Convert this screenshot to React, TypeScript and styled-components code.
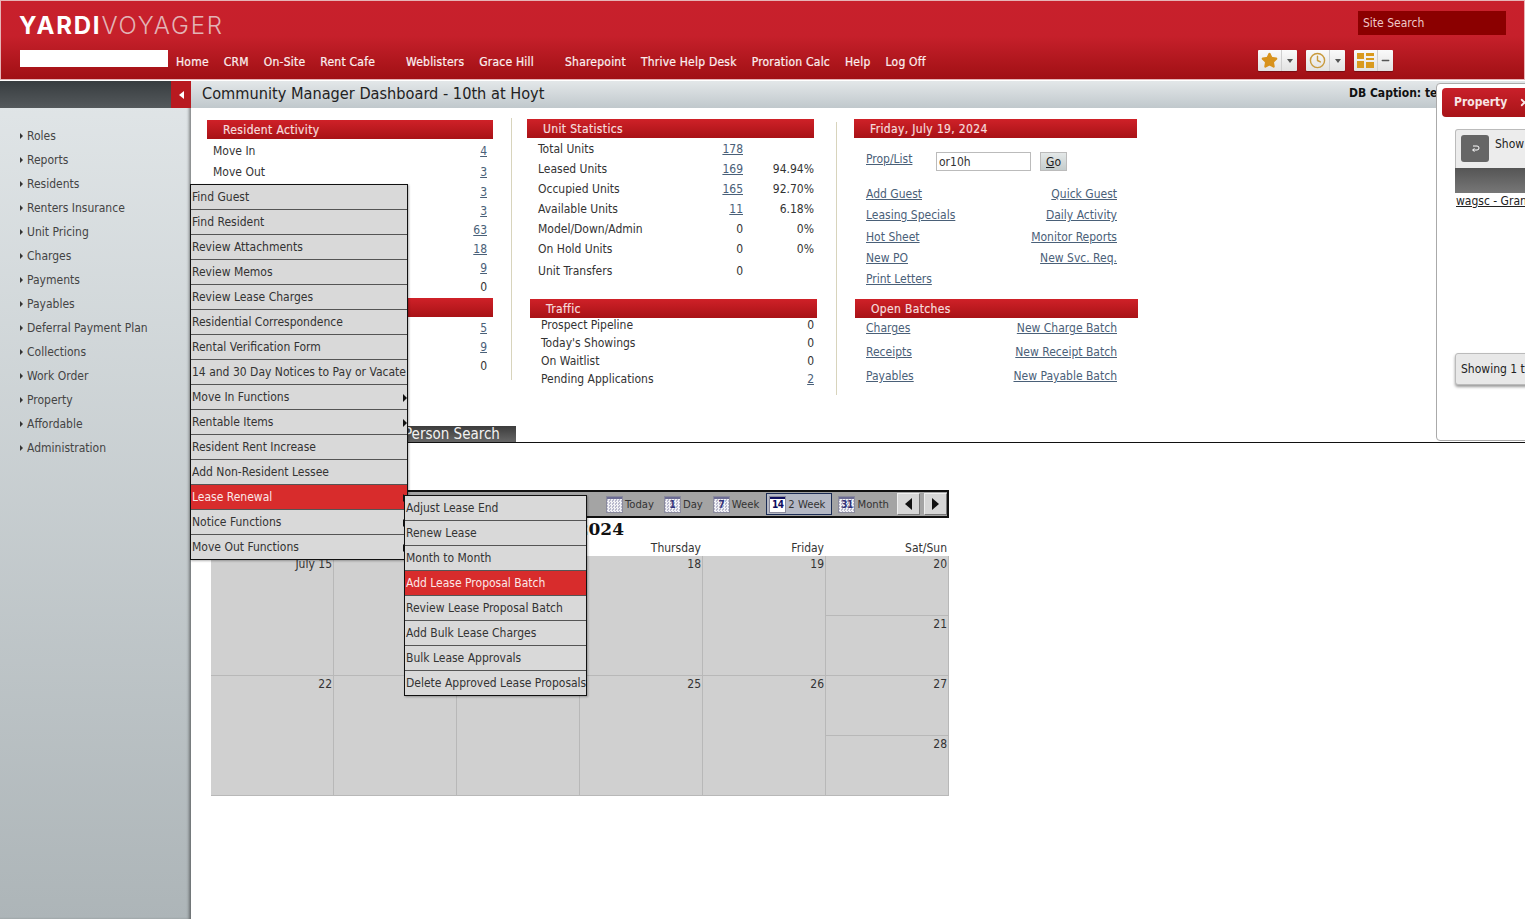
import React, { FC } from 'react'
import styled, { createGlobalStyle } from 'styled-components'
import { Star, Clock, Minus, X } from 'lucide-react'

const FONT = `'DejaVu Sans Condensed', 'Noto Sans', Tahoma, sans-serif`

const Global = createGlobalStyle`
html, body {
  margin: 0;
  height: 100%;
  background: #fff;
  overflow: hidden;
}
* { box-sizing: border-box; }
`
const Page = styled.div`
position: relative;
width: 1525px;
height: 919px;
overflow: hidden;
font-family: ${FONT};
font-size: 12px;
color: #333;
`
const Header = styled.header`
height: 80px;
border: 1px solid #e6b4b6;
background: linear-gradient(#c8202c 0%, #c6202b 45%, #a01014 100%);
padding: 10px 18px 0 18px;
display: flex;
flex-direction: column;
`
const TopRow = styled.div`
display: flex;
justify-content: space-between;
height: 39px;
`
const Logo = styled.div`
font-family: Inter, 'Liberation Sans', Arial, sans-serif;
font-size: 24px;
font-weight: 300;
line-height: 28px;
letter-spacing: 1.8px;
color: #e3b3b5;
margin-top: 1px;
b { color: #fff; font-weight: 700; margin-right: 0; }
`
const SiteSearch = styled.div`
width: 148px;
height: 24px;
background: #8b0000;
color: #f0c8c8;
padding: 0 5px;
line-height: 24px;
font-size: 12px;
`
const NavRow = styled.div`
display: flex;
align-items: flex-start;
`
const NavBox = styled.div`
width: 148px;
height: 17px;
background: #fff;
margin: 0 8px 0 1px;
`
const NavLink = styled.a<{ $wide?: boolean }>`
color: #fbeaea;
font-size: 12px;
line-height: 22px;
letter-spacing: 0.22px;
margin-top: 1px;
margin-right: ${p => (p.$wide ? 31 : 15)}px;
-webkit-text-stroke: 0.2px #fff;
white-space: nowrap;
`
const Tools = styled.div`
display: flex;
gap: 9px;
margin-left: auto;
margin-right: 113px;
margin-top: 0;
`
const Tool = styled.div`
width: 39px;
height: 21px;
display: flex;
background: linear-gradient(#fafafa, #e2e2e2);
border-radius: 1px;
box-shadow: 0 1px 1px rgba(0,0,0,.3);
`
const ToolIcon = styled.div`
width: 24px;
display: flex;
align-items: center;
justify-content: center;
border-right: 1px solid #cfcfcf;
`
const ToolEnd = styled.div`
flex: 1;
display: flex;
align-items: center;
justify-content: center;
color: #555;
`
const Caret = styled.span`
border-left: 3px solid transparent;
border-right: 3px solid transparent;
border-top: 4px solid #555;
`
const Body = styled.div`
display: flex;
margin-top: 1px;
height: 838px;
`
const Sidebar = styled.aside`
width: 191px;
flex-shrink: 0;
background: linear-gradient(#e1e6e8, #adb5b8);
box-shadow: inset -3px 0 3px -1px rgba(0,0,0,.4);
`
const SideTop = styled.div`
height: 27px;
background: linear-gradient(#383d40, #54595c);
display: flex;
justify-content: flex-end;
`
const Collapse = styled.div`
width: 20px;
background: #b81a20;
display: flex;
align-items: center;
justify-content: center;
&::before {
  content: '';
  border-top: 4px solid transparent;
  border-bottom: 4px solid transparent;
  border-right: 5px solid #fff;
}
`
const SideList = styled.nav`
padding: 16px 0 0 20px;
`
const SideItem = styled.div`
height: 24px;
line-height: 24px;
color: #444;
display: flex;
align-items: center;
gap: 4px;
&::before {
  content: '';
  border-top: 3px solid transparent;
  border-bottom: 3px solid transparent;
  border-left: 3px solid #333;
}
`
const Main = styled.main`
flex: 1;
min-width: 0;
`
const TitleBar = styled.div`
height: 27px;
background: linear-gradient(#e3e7e9, #c0c8cc);
display: flex;
justify-content: space-between;
padding-left: 11px;
`
const Title = styled.h1`
margin: 0;
font-size: 16.2px;
font-weight: 400;
line-height: 26px;
color: #222;
`
const Caption = styled.div`
font-size: 12px;
font-weight: 700;
line-height: 24px;
color: #111;
white-space: nowrap;
margin-right: -12px;
width: 99px;
overflow: hidden;
position: relative;
left: -89px;
`
const Columns = styled.div`
display: flex;
height: 318px;
`
const ActivityCol = styled.section`
width: 320px;
padding: 12px 18px 0 16px;
`
const Divider = styled.div<{ $h: number; $top: number }>`
width: 1px;
height: ${p => p.$h}px;
margin-top: ${p => p.$top}px;
background: #d8d4bc;
flex-shrink: 0;
`
const UnitCol = styled.section`
width: 324px;
padding: 11px 0 0 15px;
`
const LinkCol = styled.section`
width: 301px;
padding: 11px 0 0 17px;
`
const PanelHead = styled.div<{ $inset?: number; $w?: number }>`
height: 19px;
line-height: 20px;
background: linear-gradient(#cf2128, #a81216);
color: #f6dcdc;
font-size: 12px;
letter-spacing: 0.35px;
-webkit-text-stroke: 0.2px #f6dcdc;
padding-left: 16px;
margin-left: ${p => p.$inset || 0}px;
width: ${p => p.$w || 287}px;
`
const ActivityList = styled.div`
margin: 2px 0 1px;
`
const ActivityRow = styled.div<{ $tall?: boolean }>`
display: flex;
justify-content: space-between;
height: ${p => (p.$tall ? 21 : 19)}px;
line-height: ${p => (p.$tall ? 21 : 19)}px;
padding: 0 6px;
`
const Link = styled.a`
color: #4a6078;
text-decoration: underline;
white-space: nowrap;
`
const StatList = styled.div`
margin: 1px 0 18px;
`
const StatRow = styled.div<{ $gap?: boolean }>`
display: grid;
grid-template-columns: 150px 55px 71px;
height: 20px;
line-height: 20px;
padding-left: 11px;
margin-top: ${p => (p.$gap ? 2 : 0)}px;
`
const Num = styled.div`
text-align: right;
`
const TrafficList = styled.div`
margin-top: -2px;
padding-left: 14px;
width: 287px;
`
const TrafficRow = styled.div`
display: flex;
justify-content: space-between;
height: 18px;
line-height: 18px;
`
const PropRow = styled.div`
display: flex;
align-items: flex-start;
margin: 14px 0 13px;
padding-left: 12px;
height: 19px;
`
const PropLink = styled(Link)`
width: 70px;
line-height: 15px;
`
const PropInput = styled.div`
width: 95px;
height: 19px;
border: 1px solid #bbb;
padding-left: 2px;
line-height: 19px;
background: #fff;
`
const GoButton = styled.div`
width: 27px;
height: 19px;
margin-left: 9px;
background: linear-gradient(#e4e8e8, #c4cccc);
border: 1px solid #bbb;
text-align: center;
line-height: 19px;
color: #222;
u { text-decoration: underline; }
`
const LinkRow = styled.div`
display: flex;
justify-content: space-between;
height: 21.3px;
line-height: 21px;
padding: 0 20px 0 12px;
width: 283px;
`
const BatchHead = styled(PanelHead)`
margin-top: 9px;
`
const BatchRow = styled(LinkRow)`
height: 24px;
line-height: 20px;
`
const TabBar = styled.div`
height: 17px;
border-bottom: 1px solid #111;
padding-left: 200px;
`
const Tab = styled.div`
width: 125px;
height: 16px;
background: linear-gradient(#3c3c3c, #666);
color: #f2f2f2;
font-size: 15px;
line-height: 17px;
padding-left: 13px;
overflow: hidden;
white-space: nowrap;
`
const Calendar = styled.section`
margin: 47px 0 0 20px;
width: 738px;
`
const CalBar = styled.div`
height: 28px;
border: 1px solid #111;
border-width: 2px 2px 2px 1px;
background: #a4a4a4;
display: flex;
justify-content: flex-end;
align-items: center;
`
const ViewBtn = styled.div<{ $active?: boolean }>`
display: flex;
align-items: center;
gap: 3px;
height: 22px;
padding: 0 ${p => (p.$active ? 6 : 3)}px 0 3px;
margin-right: 3px;
color: #333;
font-size: 11.2px;
border: 1px solid ${p => (p.$active ? '#1c2c54' : 'transparent')};
background: ${p => (p.$active ? '#b4b8c4' : 'transparent')};
`
const CalIcon = styled.span<{ $dark?: boolean }>`
width: 15px;
height: 15px;
display: inline-flex;
align-items: center;
justify-content: center;
color: ${p => (p.$dark ? '#0c0c60' : '#33337a')};
font-size: 10px;
font-weight: 700;
letter-spacing: -0.5px;
line-height: 1;
border-top: 2px solid ${p => (p.$dark ? '#101060' : '#6c6c94')};
background: ${p => (p.$dark ? '#fff' : 'repeating-conic-gradient(#f2f2f6 0 25%, #b8b8cc 0 50%) 0 0 / 3px 3px')};
outline: 1px solid #8a8a9c;
`
const Arrow = styled.div<{ $dir: 'left' | 'right' }>`
width: 23px;
height: 22px;
margin-left: ${p => (p.$dir === 'left' ? 1 : 4)}px;
background: #d6d6d6;
border: 1px solid #eee;
border-right-color: #777;
border-bottom-color: #777;
display: flex;
align-items: center;
justify-content: center;
&::before {
  content: '';
  border-top: 6px solid transparent;
  border-bottom: 6px solid transparent;
  ${p => (p.$dir === 'left' ? 'border-right: 7px solid #111;' : 'border-left: 7px solid #111;')}
}
`
const CalTitle = styled.div`
font-family: 'DejaVu Serif', serif;
font-weight: 700;
font-size: 17px;
line-height: 22px;
height: 20px;
color: #111;
text-align: right;
padding-right: 325px;
`
const DayHeads = styled.div`
display: grid;
grid-template-columns: repeat(6, 123px);
height: 18px;
line-height: 21px;
`
const DayHead = styled.div`
text-align: right;
padding-right: 2px;
`
const Week = styled.div`
display: grid;
grid-template-columns: repeat(6, 123px);
height: 120px;
`
const Cell = styled.div`
background: #d0d0d0;
border-right: 1px solid #b8b8b8;
border-bottom: 1px solid #b8b8b8;
text-align: right;
padding-right: 1px;
line-height: 16px;
`
const SplitCell = styled.div`
display: grid;
grid-template-rows: 60px 60px;
`
const Menu = styled.ul<{ $left: number; $top: number; $w: number; $z: number }>`
position: absolute;
left: ${p => p.$left}px;
top: ${p => p.$top}px;
width: ${p => p.$w}px;
z-index: ${p => p.$z};
margin: 0;
padding: 0;
list-style: none;
border: 1px solid #111;
background: #d9d9d9;
box-shadow: 1px 1px 2px rgba(0,0,0,.3);
`
const MenuItem = styled.li<{ $on?: boolean; $sub?: boolean }>`
position: relative;
height: 25px;
line-height: 24px;
padding-left: 1px;
white-space: nowrap;
color: ${p => (p.$on ? '#fbe8e8' : '#333')};
background: ${p => (p.$on ? '#d82c2c' : 'transparent')};
border-bottom: 1px solid #555;
&:last-child { border-bottom: 0; height: 24px; }
${p => p.$sub && `&::after {
  content: '';
  position: absolute;
  right: 0;
  top: 9px;
  border-top: 4px solid transparent;
  border-bottom: 4px solid transparent;
  border-left: 4px solid #111;
}`}
`
const PropertyPanel = styled.aside`
position: absolute;
left: 1436px;
top: 83px;
width: 200px;
height: 358px;
background: #fff;
border: 1px solid #aaa;
border-radius: 4px;
z-index: 2;
padding: 4px 0 0 5px;
`
const PropertyTab = styled.div`
width: 120px;
height: 29px;
background: linear-gradient(#c9202a, #a81418);
border-radius: 4px;
color: #f8e4e4;
font-weight: 700;
font-size: 12px;
line-height: 27px;
padding-left: 12px;
display: flex;
align-items: center;
gap: 12px;
`
const ShowCard = styled.div`
margin: 12px 0 0 13px;
width: 150px;
height: 39px;
background: #ececec;
border: 1px solid #bbb;
border-bottom: 0;
border-radius: 3px 3px 0 0;
padding: 5px;
display: flex;
gap: 6px;
line-height: 19px;
color: #222;
`
const RefreshBox = styled.div`
width: 28px;
height: 27px;
background: #666;
border-radius: 3px;
color: #fff;
display: flex;
align-items: center;
justify-content: center;
`
const ShowBar = styled.div`
margin-left: 13px;
width: 150px;
height: 25px;
background: linear-gradient(#555, #777);
`
const Property = styled.a`
display: block;
margin: 1px 0 0 14px;
line-height: 15px;
color: #222;
text-decoration: underline;
white-space: nowrap;
`
const ShowingCard = styled.div`
margin: 144px 0 0 13px;
width: 150px;
height: 32px;
background: #e8e8e8;
border: 1px solid #bbb;
border-radius: 3px;
box-shadow: 0 2px 3px rgba(0,0,0,.4);
line-height: 31px;
padding-left: 5px;
color: #222;
`

const sideItems = ['Roles', 'Reports', 'Residents', 'Renters Insurance', 'Unit Pricing', 'Charges', 'Payments', 'Payables', 'Deferral Payment Plan', 'Collections', 'Work Order', 'Property', 'Affordable', 'Administration']

const unitStats = [
  { label: 'Total Units', n: '178', link: true, pct: '' },
  { label: 'Leased Units', n: '169', link: true, pct: '94.94%' },
  { label: 'Occupied Units', n: '165', link: true, pct: '92.70%' },
  { label: 'Available Units', n: '11', link: true, pct: '6.18%' },
  { label: 'Model/Down/Admin', n: '0', pct: '0%' },
  { label: 'On Hold Units', n: '0', pct: '0%' },
  { label: 'Unit Transfers', n: '0', pct: '', gap: true },
]

const menuItems = [
  { t: 'Find Guest' }, { t: 'Find Resident' }, { t: 'Review Attachments' }, { t: 'Review Memos' },
  { t: 'Review Lease Charges' }, { t: 'Residential Correspondence' }, { t: 'Rental Verification Form' },
  { t: '14 and 30 Day Notices to Pay or Vacate' }, { t: 'Move In Functions', sub: true }, { t: 'Rentable Items', sub: true },
  { t: 'Resident Rent Increase' }, { t: 'Add Non-Resident Lessee' }, { t: 'Lease Renewal', on: true, sub: true },
  { t: 'Notice Functions', sub: true }, { t: 'Move Out Functions', sub: true },
]

const subItems = [
  { t: 'Adjust Lease End' }, { t: 'Renew Lease' }, { t: 'Month to Month' }, { t: 'Add Lease Proposal Batch', on: true },
  { t: 'Review Lease Proposal Batch' }, { t: 'Add Bulk Lease Charges' }, { t: 'Bulk Lease Approvals' }, { t: 'Delete Approved Lease Proposals' },
]

const quickLinks = [
  ['Add Guest', 'Quick Guest'], ['Leasing Specials', 'Daily Activity'], ['Hot Sheet', 'Monitor Reports'],
  ['New PO', 'New Svc. Req.'], ['Print Letters', ''],
]

const LayoutIcon: FC = () => (
  <svg width="17" height="15" viewBox="0 0 17 15">
    <rect x="0" y="0" width="7" height="6" fill="#d99a1e" />
    <rect x="0" y="8" width="7" height="7" fill="#d99a1e" />
    <rect x="9" y="0" width="8" height="3" fill="#d99a1e" />
    <rect x="9" y="5" width="8" height="2" fill="#d99a1e" />
    <rect x="9" y="9" width="8" height="6" fill="#d99a1e" />
  </svg>
)

const App: FC = () => {
  return (
    <Page>
      <Global />
      <Header>
        <TopRow>
          <Logo><b>YARDI</b>VOYAGER</Logo>
          <SiteSearch>Site Search</SiteSearch>
        </TopRow>
        <NavRow>
          <NavBox />
          <NavLink>Home</NavLink>
          <NavLink>CRM</NavLink>
          <NavLink>On-Site</NavLink>
          <NavLink $wide>Rent Cafe</NavLink>
          <NavLink>Weblisters</NavLink>
          <NavLink $wide>Grace Hill</NavLink>
          <NavLink>Sharepoint</NavLink>
          <NavLink>Thrive Help Desk</NavLink>
          <NavLink>Proration Calc</NavLink>
          <NavLink>Help</NavLink>
          <NavLink>Log Off</NavLink>
          <Tools>
            <Tool>
              <ToolIcon><Star size={17} fill="#d8921c" color="#d8921c" /></ToolIcon>
              <ToolEnd><Caret /></ToolEnd>
            </Tool>
            <Tool>
              <ToolIcon><Clock size={17} color="#c89a3c" strokeWidth={2} /></ToolIcon>
              <ToolEnd><Caret /></ToolEnd>
            </Tool>
            <Tool>
              <ToolIcon><LayoutIcon /></ToolIcon>
              <ToolEnd><Minus size={11} strokeWidth={3} /></ToolEnd>
            </Tool>
          </Tools>
        </NavRow>
      </Header>
      <Body>
        <Sidebar>
          <SideTop><Collapse /></SideTop>
          <SideList>
            {sideItems.map(item => <SideItem key={item}>{item}</SideItem>)}
          </SideList>
        </Sidebar>
        <Main>
          <TitleBar>
            <Title>Community Manager Dashboard - 10th at Hoyt</Title>
            <Caption>DB Caption: test</Caption>
          </TitleBar>
          <Columns>
            <ActivityCol>
              <PanelHead $w={286}>Resident Activity</PanelHead>
              <ActivityList>
                <ActivityRow $tall><span>Move In</span><Link>4</Link></ActivityRow>
                <ActivityRow $tall><span>Move Out</span><Link>3</Link></ActivityRow>
                <ActivityRow><span /><Link>3</Link></ActivityRow>
                <ActivityRow><span /><Link>3</Link></ActivityRow>
                <ActivityRow><span /><Link>63</Link></ActivityRow>
                <ActivityRow><span /><Link>18</Link></ActivityRow>
                <ActivityRow><span /><Link>9</Link></ActivityRow>
                <ActivityRow><span /><span>0</span></ActivityRow>
              </ActivityList>
              <PanelHead $w={286} />
              <ActivityList>
                <ActivityRow><span /><Link>5</Link></ActivityRow>
                <ActivityRow><span /><Link>9</Link></ActivityRow>
                <ActivityRow><span /><span>0</span></ActivityRow>
              </ActivityList>
            </ActivityCol>
            <Divider $h={262} $top={10} />
            <UnitCol>
              <PanelHead>Unit Statistics</PanelHead>
              <StatList>
                {unitStats.map(s => (
                  <StatRow key={s.label} $gap={s.gap}>
                    <span>{s.label}</span>
                    <Num>{s.link ? <Link>{s.n}</Link> : s.n}</Num>
                    <Num>{s.pct}</Num>
                  </StatRow>
                ))}
              </StatList>
              <PanelHead $inset={3}>Traffic</PanelHead>
              <TrafficList>
                <TrafficRow><span>Prospect Pipeline</span><span>0</span></TrafficRow>
                <TrafficRow><span>Today's Showings</span><span>0</span></TrafficRow>
                <TrafficRow><span>On Waitlist</span><span>0</span></TrafficRow>
                <TrafficRow><span>Pending Applications</span><Link>2</Link></TrafficRow>
              </TrafficList>
            </UnitCol>
            <Divider $h={273} $top={14} />
            <LinkCol>
              <PanelHead $w={283}>Friday, July 19, 2024</PanelHead>
              <PropRow>
                <PropLink>Prop/List</PropLink>
                <PropInput>or10h</PropInput>
                <GoButton><u>G</u>o</GoButton>
              </PropRow>
              {quickLinks.map(([a, b]) => (
                <LinkRow key={a}><Link>{a}</Link><Link>{b}</Link></LinkRow>
              ))}
              <BatchHead $w={283} $inset={1}>Open Batches</BatchHead>
              <BatchRow><Link>Charges</Link><Link>New Charge Batch</Link></BatchRow>
              <BatchRow><Link>Receipts</Link><Link>New Receipt Batch</Link></BatchRow>
              <BatchRow><Link>Payables</Link><Link>New Payable Batch</Link></BatchRow>
            </LinkCol>
          </Columns>
          <TabBar>
            <Tab>Person Search</Tab>
          </TabBar>
          <Calendar>
            <CalBar>
              <ViewBtn><CalIcon /> Today</ViewBtn>
              <ViewBtn><CalIcon>1</CalIcon> Day</ViewBtn>
              <ViewBtn><CalIcon>7</CalIcon> Week</ViewBtn>
              <ViewBtn $active><CalIcon $dark>14</CalIcon> 2 Week</ViewBtn>
              <ViewBtn><CalIcon>31</CalIcon> Month</ViewBtn>
              <Arrow $dir="left" />
              <Arrow $dir="right" />
            </CalBar>
            <CalTitle>July 15 - 28, 2024</CalTitle>
            <DayHeads>
              {['Monday', 'Tuesday', 'Wednesday', 'Thursday', 'Friday', 'Sat/Sun'].map(d => <DayHead key={d}>{d}</DayHead>)}
            </DayHeads>
            <Week>
              {['July 15', '16', '17', '18', '19'].map(d => <Cell key={d}>{d}</Cell>)}
              <SplitCell><Cell>20</Cell><Cell>21</Cell></SplitCell>
            </Week>
            <Week>
              {['22', '23', '24', '25', '26'].map(d => <Cell key={d}>{d}</Cell>)}
              <SplitCell><Cell>27</Cell><Cell>28</Cell></SplitCell>
            </Week>
          </Calendar>
        </Main>
      </Body>
      <Menu $left={190} $top={184} $w={218} $z={3}>
        {menuItems.map(m => <MenuItem key={m.t} $on={m.on} $sub={m.sub}>{m.t}</MenuItem>)}
      </Menu>
      <Menu $left={404} $top={495} $w={183} $z={4}>
        {subItems.map(m => <MenuItem key={m.t} $on={m.on}>{m.t}</MenuItem>)}
      </Menu>
      <PropertyPanel>
        <PropertyTab>Property <X size={11} strokeWidth={4} /></PropertyTab>
        <ShowCard>
          <RefreshBox>
            <svg width="9" height="11" viewBox="0 0 9 11" fill="none" stroke="#fff" strokeWidth="1">
              <path d="M2 3 H6 A2 2 0 0 1 6 7 H2 M3.5 5.5 L1.5 7 L3.5 8.5" />
            </svg>
          </RefreshBox>
          Show
        </ShowCard>
        <ShowBar />
        <Property>wagsc - Grand</Property>
        <ShowingCard>Showing 1 to 1</ShowingCard>
      </PropertyPanel>
    </Page>
  )
}

export default App
